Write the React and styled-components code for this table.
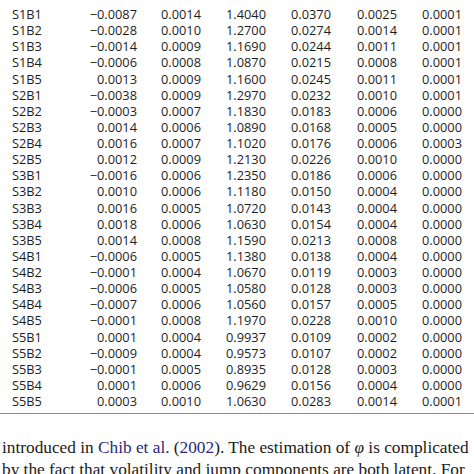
import React from "react"
import styled, { createGlobalStyle } from "styled-components"

const GlobalStyle = createGlobalStyle`
  html, body {
    margin: 0;
    padding: 0;
    background: #ffffff;
  }
  body {
    width: 474px;
    height: 474px;
    overflow: hidden;
  }
`

const Page = styled.div`
  width: 474px;
  height: 474px;
  overflow: hidden;
  background: #fff;
`

const Table = styled.div`
  display: grid;
  grid-template-columns: 60px 65px 64px 65px 65px 66px 65px;
  padding: 6px 0 4px 12px;
  border-bottom: 1.5px solid #8a8a8a;
  font-family: "Open Sans", "Noto Sans", sans-serif;
  font-size: 12.8px;
  line-height: 16.125px;
  color: #1e1e1e;
`

const Cell = styled.div`
  text-align: ${(p) => (p.$label ? "left" : "right")};
  white-space: nowrap;
`

const Text = styled.p`
  margin: 0;
  padding: 22.5px 0 0 2px;
  font-family: "Liberation Serif", "DejaVu Serif", serif;
  font-size: 17.3px;
  line-height: 22px;
  color: #1a1a1a;
  white-space: nowrap;
`

const Link = styled.span`
  color: #2a2a7c;
`

const rows = [
  ["S1B1", "\u22120.0087", "0.0014", "1.4040", "0.0370", "0.0025", "0.0001"],
  ["S1B2", "\u22120.0028", "0.0010", "1.2700", "0.0274", "0.0014", "0.0001"],
  ["S1B3", "\u22120.0014", "0.0009", "1.1690", "0.0244", "0.0011", "0.0001"],
  ["S1B4", "\u22120.0006", "0.0008", "1.0870", "0.0215", "0.0008", "0.0001"],
  ["S1B5", "0.0013", "0.0009", "1.1600", "0.0245", "0.0011", "0.0001"],
  ["S2B1", "\u22120.0038", "0.0009", "1.2970", "0.0232", "0.0010", "0.0001"],
  ["S2B2", "\u22120.0003", "0.0007", "1.1830", "0.0183", "0.0006", "0.0000"],
  ["S2B3", "0.0014", "0.0006", "1.0890", "0.0168", "0.0005", "0.0000"],
  ["S2B4", "0.0016", "0.0007", "1.1020", "0.0176", "0.0006", "0.0003"],
  ["S2B5", "0.0012", "0.0009", "1.2130", "0.0226", "0.0010", "0.0000"],
  ["S3B1", "\u22120.0016", "0.0006", "1.2350", "0.0186", "0.0006", "0.0000"],
  ["S3B2", "0.0010", "0.0006", "1.1180", "0.0150", "0.0004", "0.0000"],
  ["S3B3", "0.0016", "0.0005", "1.0720", "0.0143", "0.0004", "0.0000"],
  ["S3B4", "0.0018", "0.0006", "1.0630", "0.0154", "0.0004", "0.0000"],
  ["S3B5", "0.0014", "0.0008", "1.1590", "0.0213", "0.0008", "0.0000"],
  ["S4B1", "\u22120.0006", "0.0005", "1.1380", "0.0138", "0.0004", "0.0000"],
  ["S4B2", "\u22120.0001", "0.0004", "1.0670", "0.0119", "0.0003", "0.0000"],
  ["S4B3", "\u22120.0006", "0.0005", "1.0580", "0.0128", "0.0003", "0.0000"],
  ["S4B4", "\u22120.0007", "0.0006", "1.0560", "0.0157", "0.0005", "0.0000"],
  ["S4B5", "\u22120.0001", "0.0008", "1.1970", "0.0228", "0.0010", "0.0000"],
  ["S5B1", "0.0001", "0.0004", "0.9937", "0.0109", "0.0002", "0.0000"],
  ["S5B2", "\u22120.0009", "0.0004", "0.9573", "0.0107", "0.0002", "0.0000"],
  ["S5B3", "\u22120.0001", "0.0005", "0.8935", "0.0128", "0.0003", "0.0000"],
  ["S5B4", "0.0001", "0.0006", "0.9629", "0.0156", "0.0004", "0.0000"],
  ["S5B5", "0.0003", "0.0010", "1.0630", "0.0283", "0.0014", "0.0001"],
]

export default function App() {
  return (
    <Page>
      <GlobalStyle />
      <Table>
        {rows.map((row) =>
          row.map((v, i) => (
            <Cell key={row[0] + i} $label={i === 0}>
              {v}
            </Cell>
          ))
        )}
      </Table>
      <Text>
        introduced in <Link>Chib et al.</Link> (<Link>2002</Link>). The estimation of <i>φ</i> is complicated
        <br />
        by the fact that volatility and jump components are both latent. For
      </Text>
    </Page>
  )
}
